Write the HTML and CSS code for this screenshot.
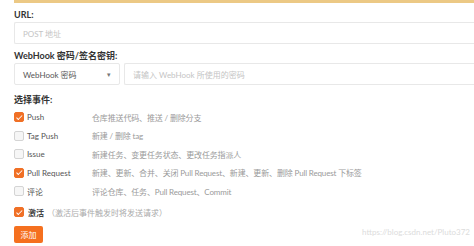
FILE: index.html
```html
<!DOCTYPE html>
<html lang="zh-CN">
<head>
  <meta charset="UTF-8">
  <title>WebHook</title>
  <link rel="stylesheet" href="styles.css">
</head>
<body>
  <!-- 提示框底边 -->
  <div class="notice"></div>

  <div class="form">
    <div class="field-label">URL:</div>
    <div class="input"><span class="placeholder">POST 地址</span></div>

    <div class="field-label">WebHook 密码/签名密钥:</div>
    <div class="input-row">
      <div class="select">
        <span>WebHook 密码</span>
        <span class="caret">▾</span>
      </div>
      <div class="input grow"><span class="placeholder">请输入 WebHook 所使用的密码</span></div>
    </div>

    <div class="field-label events-label">选择事件:</div>
    <div class="events">
      <div class="event">
        <span class="check on"></span>
        <span class="name">Push</span>
        <span class="desc">仓库推送代码、推送 / 删除分支</span>
      </div>
      <div class="event">
        <span class="check"></span>
        <span class="name">Tag Push</span>
        <span class="desc">新建 / 删除 tag</span>
      </div>
      <div class="event">
        <span class="check"></span>
        <span class="name">Issue</span>
        <span class="desc">新建任务、变更任务状态、更改任务指派人</span>
      </div>
      <div class="event">
        <span class="check on"></span>
        <span class="name">Pull Request</span>
        <span class="desc">新建、更新、合并、关闭 Pull Request、新建、更新、删除 Pull Request 下标签</span>
      </div>
      <div class="event">
        <span class="check"></span>
        <span class="name">评论</span>
        <span class="desc">评论仓库、任务、Pull Request、Commit</span>
      </div>
    </div>

    <div class="active">
      <span class="check on"></span>
      <span class="active-name">激活</span>
      <span class="hint">（激活后事件触发时将发送请求）</span>
    </div>

    <button class="btn">添加</button>
  </div>

  <div class="watermark">https://blog.csdn.net/Pluto372</div>
</body>
</html>
```

FILE: styles.css
```css
/* 基本设置 */
body {
  margin: 0;
  height: 246px;
  overflow: hidden;
  position: relative;
  background: #fff;
  font-family: Lato, "Noto Sans CJK SC", sans-serif;
  color: #444;
}

.notice {
  margin-left: 14px;
  height: 3px;
  background: #ecc985;
}

.form {
  padding-left: 14px;
}

.field-label {
  font-size: 9px;
  font-weight: bold;
  color: #333;
  height: 12px;
  line-height: 12px;
  margin-top: 6px;
}

.form > .field-label:first-child {
  margin-bottom: 1px;
}

.events-label {
  margin-top: 9px;
}

/* 输入框右侧延伸到画面外 */
.input {
  height: 20px;
  border: 1px solid #e8e8e8;
  border-right: none;
  border-radius: 2px 0 0 2px;
  display: flex;
  align-items: center;
  padding-left: 8px;
  margin-top: 1px;
}

.placeholder {
  font-size: 8px;
  color: #c4c4c4;
}

.input-row {
  display: flex;
  gap: 4px;
  margin-top: 1px;
}

.input-row .input {
  margin-top: 0;
}

.grow {
  flex: 1;
}

.select {
  width: 88px;
  height: 20px;
  border: 1px solid #e8e8e8;
  border-radius: 2px;
  padding: 0 8px;
  display: flex;
  align-items: center;
  justify-content: space-between;
  font-size: 8px;
  color: #555;
  flex: none;
}

.caret {
  font-size: 7px;
  color: #777;
}

/* 事件列表 */
.events {
  margin-top: 2px;
}

.event {
  height: 18.5px;
  display: flex;
  align-items: center;
  font-size: 8px;
}

.check {
  width: 8px;
  height: 8px;
  border: 1px solid #d4d4d4;
  border-radius: 2px;
  background: #f6f6f6;
  flex: none;
  position: relative;
}

.check.on {
  background: #f07026;
  border-color: #f07026;
}

.check.on::after {
  content: "";
  position: absolute;
  left: 2.5px;
  top: 0.5px;
  width: 2px;
  height: 4.5px;
  border: solid #fff;
  border-width: 0 1.5px 1.5px 0;
  transform: rotate(45deg);
}

.name {
  width: 65px;
  margin-left: 3px;
  color: #555;
  flex: none;
}

.desc {
  color: #9a9a9a;
  white-space: nowrap;
  letter-spacing: -0.15px;
}

.active {
  display: flex;
  align-items: center;
  height: 18px;
  margin-top: 2.5px;
  font-size: 8px;
}

.active-name {
  margin-left: 4px;
  font-weight: bold;
  color: #444;
}

.hint {
  margin-left: 3px;
  color: #aaa;
}

.btn {
  display: block;
  margin-top: 5px;
  width: 29px;
  height: 17px;
  padding: 0;
  border: none;
  border-radius: 2px;
  background: #f5701f;
  color: #fff;
  font-family: inherit;
  font-size: 8px;
}

.watermark {
  position: absolute;
  right: 4px;
  top: 227px;
  font-size: 8px;
  color: #dcdcdc;
}
```
